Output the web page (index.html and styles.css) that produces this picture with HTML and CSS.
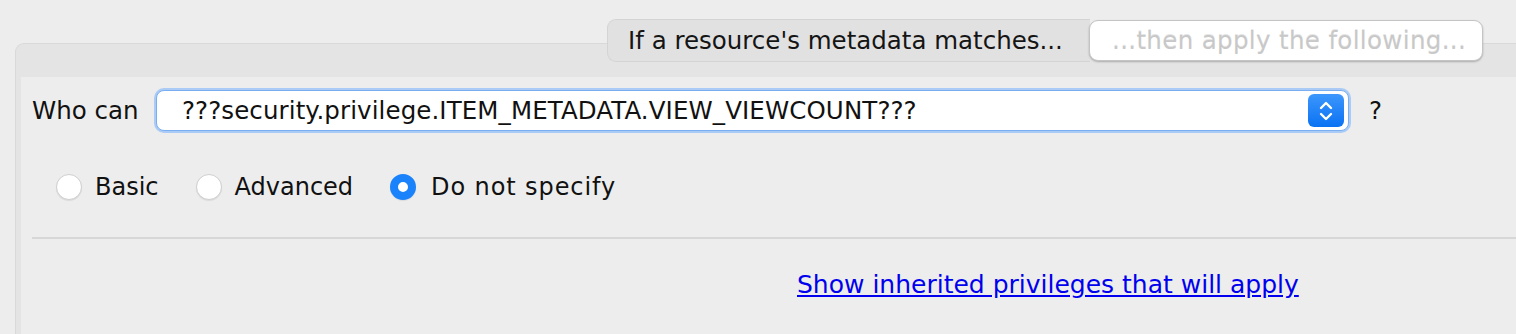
FILE: index.html
```html
<!DOCTYPE html>
<html>
<head>
<meta charset="utf-8">
<link rel="stylesheet" href="styles.css">
</head>
<body>
<div class="page">
  <div class="tabs-row">
    <div class="tabs">
      <div class="tab tab-left">If a resource's metadata matches...</div>
      <div class="tab tab-right">...then apply the following...</div>
    </div>
  </div>
  <div class="panel">
    <div class="content">
      <div class="who-row">
        <span class="who-label">Who can</span>
        <div class="combo">
          <span class="combo-text">???security.privilege.ITEM_METADATA.VIEW_VIEWCOUNT???</span>
          <span class="combo-btn">
            <svg width="18" height="26" viewBox="0 0 18 26">
              <path d="M4 10 L9 5 L14 10" fill="none" stroke="#fff" stroke-width="2.4" stroke-linecap="round" stroke-linejoin="round"/>
              <path d="M4 16 L9 21 L14 16" fill="none" stroke="#fff" stroke-width="2.4" stroke-linecap="round" stroke-linejoin="round"/>
            </svg>
          </span>
        </div>
        <span class="qmark">?</span>
      </div>
      <div class="radios">
        <label class="radio"><span class="dot"></span><span>Basic</span></label>
        <label class="radio"><span class="dot"></span><span>Advanced</span></label>
        <label class="radio"><span class="dot on"></span><span class="wide">Do not specify</span></label>
      </div>
      <div class="sep"></div>
      <div class="link-row">
        <a class="link" href="#">Show inherited privileges that will apply</a>
      </div>
    </div>
  </div>
</div>
</body>
</html>
```
FILE: styles.css
```css
html, body {
  margin: 0;
  padding: 0;
  background: #ededed;
  font-family: "DejaVu Sans", sans-serif;
  color: #111;
  overflow: hidden;
}
.page {
  width: 1516px;
  height: 334px;
  padding-top: 19px;
  box-sizing: border-box;
  overflow: hidden;
}
.tabs-row {
  display: flex;
  justify-content: flex-end;
  padding-right: 33px;
  position: relative;
  z-index: 2;
}
.tabs {
  display: flex;
  height: 43px;
}
.tab {
  display: flex;
  align-items: center;
  font-size: 24.5px;
  box-sizing: border-box;
  white-space: nowrap;
}
.tab-left {
  width: 483px;
  padding-left: 20px;
  background: #e1e1e1;
  border: 1px solid #d4d4d4;
  border-right: none;
  border-radius: 9px 0 0 9px;
  color: #151515;
}
.tab-right {
  width: 394px;
  margin: 1px 0;
  padding-left: 22px;
  background: #ffffff;
  border: 1px solid #c4c4c4;
  border-radius: 9px;
  box-shadow: 0 1px 2px rgba(0,0,0,0.25);
  color: #c8c8c8;
  letter-spacing: 0.35px;
  text-shadow: 0 1px 0 #ffffff, 0 -1px 0 #e6e6e6;
  margin-left: -1px;
}
.panel {
  margin-top: -19px;
  margin-left: 15px;
  height: 320px;
  border: 1px solid #d9d9d9;
  border-right: none;
  border-radius: 9px 0 0 0;
  background: #e4e4e4;
  padding: 33px 0 0 5px;
  box-sizing: border-box;
}
.content {
  background: #ededed;
  height: 100%;
  padding: 13px 0 0 11px;
  box-sizing: border-box;
}
.who-row {
  display: flex;
  align-items: center;
  height: 41px;
}
.who-label {
  font-size: 24.5px;
  width: 124px;
}
.combo {
  width: 1193px;
  height: 41px;
  box-sizing: border-box;
  background: #fff;
  border: 1px solid #7aaef0;
  border-radius: 8px;
  box-shadow: 0 0 0 2px #a9cbf5;
  display: flex;
  align-items: center;
  justify-content: space-between;
  padding: 0 4px 0 25px;
}
.combo-text {
  font-size: 24.5px;
  letter-spacing: 0.1px;
  color: #111;
}
.combo-btn {
  width: 36px;
  height: 33px;
  border-radius: 6px;
  background: linear-gradient(#3d97fc, #0a72f3);
  display: flex;
  align-items: center;
  justify-content: center;
}
.qmark {
  font-size: 24.5px;
  margin-left: 20px;
}
.radios {
  display: flex;
  align-items: center;
  height: 26px;
  margin-top: 43px;
  padding-left: 24px;
}
.radio {
  display: flex;
  align-items: center;
  font-size: 24px;
  margin-right: 37px;
}
.wide {
  letter-spacing: 0.9px;
  margin-left: 2px;
}
.dot {
  width: 26px;
  height: 26px;
  border-radius: 50%;
  box-sizing: border-box;
  background: #fff;
  border: 1px solid #cfcfcf;
  box-shadow: 0 1px 1px rgba(0,0,0,0.08);
  margin-right: 13px;
}
.dot.on {
  border: 8px solid #1a82fb;
  background: #fff;
}
.sep {
  height: 2px;
  background: #d7d7d7;
  margin-top: 37px;
}
.link-row {
  padding-left: 765px;
  margin-top: 31px;
}
.link {
  color: #0000ee;
  font-family: "DejaVu Sans", sans-serif;
  font-size: 25px;
  text-decoration: underline;
}
```
